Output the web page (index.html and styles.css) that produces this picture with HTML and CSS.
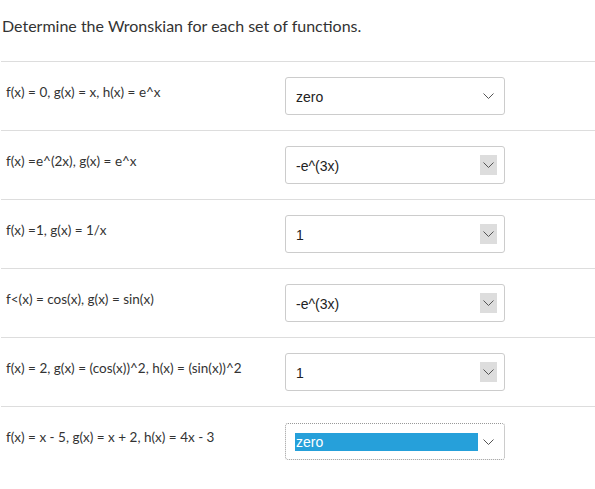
FILE: index.html
```html
<!DOCTYPE html>
<html>
<head>
<meta charset="utf-8">
<link rel="stylesheet" href="styles.css">
</head>
<body>
<div class="title">Determine the Wronskian for each set of functions.</div>
<div class="rows">
  <div class="row">
    <div class="label">f(x) = 0, g(x) = x, h(x) = e^x</div>
    <div class="select"><span class="value">zero</span><span class="arrow"><svg width="11" height="6" viewBox="0 0 11 6"><polyline points="0.5,0.5 5.5,5.5 10.5,0.5" fill="none" stroke="#555" stroke-width="1"/></svg></span></div>
  </div>
  <div class="row">
    <div class="label">f(x) =e^(2x), g(x) = e^x</div>
    <div class="select"><span class="value">-e^(3x)</span><span class="arrow hover"><svg width="11" height="6" viewBox="0 0 11 6"><polyline points="0.5,0.5 5.5,5.5 10.5,0.5" fill="none" stroke="#555" stroke-width="1"/></svg></span></div>
  </div>
  <div class="row">
    <div class="label">f(x) =1, g(x) = 1/x</div>
    <div class="select"><span class="value">1</span><span class="arrow hover"><svg width="11" height="6" viewBox="0 0 11 6"><polyline points="0.5,0.5 5.5,5.5 10.5,0.5" fill="none" stroke="#555" stroke-width="1"/></svg></span></div>
  </div>
  <div class="row">
    <div class="label">f&lt;(x) = cos(x), g(x) = sin(x)</div>
    <div class="select"><span class="value">-e^(3x)</span><span class="arrow hover"><svg width="11" height="6" viewBox="0 0 11 6"><polyline points="0.5,0.5 5.5,5.5 10.5,0.5" fill="none" stroke="#555" stroke-width="1"/></svg></span></div>
  </div>
  <div class="row">
    <div class="label">f(x) = 2, g(x) = (cos(x))^2, h(x) = (sin(x))^2</div>
    <div class="select"><span class="value">1</span><span class="arrow hover"><svg width="11" height="6" viewBox="0 0 11 6"><polyline points="0.5,0.5 5.5,5.5 10.5,0.5" fill="none" stroke="#555" stroke-width="1"/></svg></span></div>
  </div>
  <div class="row">
    <div class="label">f(x) = x - 5, g(x) = x + 2, h(x) = 4x - 3</div>
    <div class="select focused"><span class="value selected">zero</span><span class="arrow"><svg width="11" height="6" viewBox="0 0 11 6"><polyline points="0.5,0.5 5.5,5.5 10.5,0.5" fill="none" stroke="#555" stroke-width="1"/></svg></span></div>
  </div>
</div>
</body>
</html>
```
FILE: styles.css
```css
html, body {
  margin: 0;
  padding: 0;
  background: #fff;
}
body {
  font-family: Lato, "Open Sans", sans-serif;
  color: #333;
}
.title {
  box-sizing: border-box;
  height: 61px;
  padding: 16px 0 0 2px;
  font-size: 16px;
  line-height: 19px;
}
.row {
  display: grid;
  grid-template-columns: 284px 220px;
  height: 69px;
  box-sizing: border-box;
  border-top: 1px solid #ddd;
  margin-left: 1px;
}
.label {
  padding: 21px 0 0 5px;
  font-size: 13.5px;
  line-height: 18px;
}
.select {
  margin-top: 15px;
  box-sizing: border-box;
  height: 38px;
  border: 1px solid #ccc;
  border-radius: 3px;
  display: flex;
  align-items: center;
  padding: 0 7px 0 10px;
  font-family: "Liberation Sans", Arial, sans-serif;
  font-size: 14px;
  color: #222;
}
.value {
  flex: 1;
  line-height: 18px;
  padding-top: 2px;
}
.arrow {
  width: 17px;
  height: 20px;
  display: flex;
  align-items: center;
  justify-content: center;
}
.arrow.hover {
  background: #dddddd;
}
.select.focused {
  margin-top: 16px;
  height: 37px;
  border: 1px dotted #999;
  padding-left: 9px;
}
.value.selected {
  background: #26a0da;
  color: #fff;
  padding: 0 0 0 1px;
  margin-right: 2px;
  margin-top: 1px;
}
```
